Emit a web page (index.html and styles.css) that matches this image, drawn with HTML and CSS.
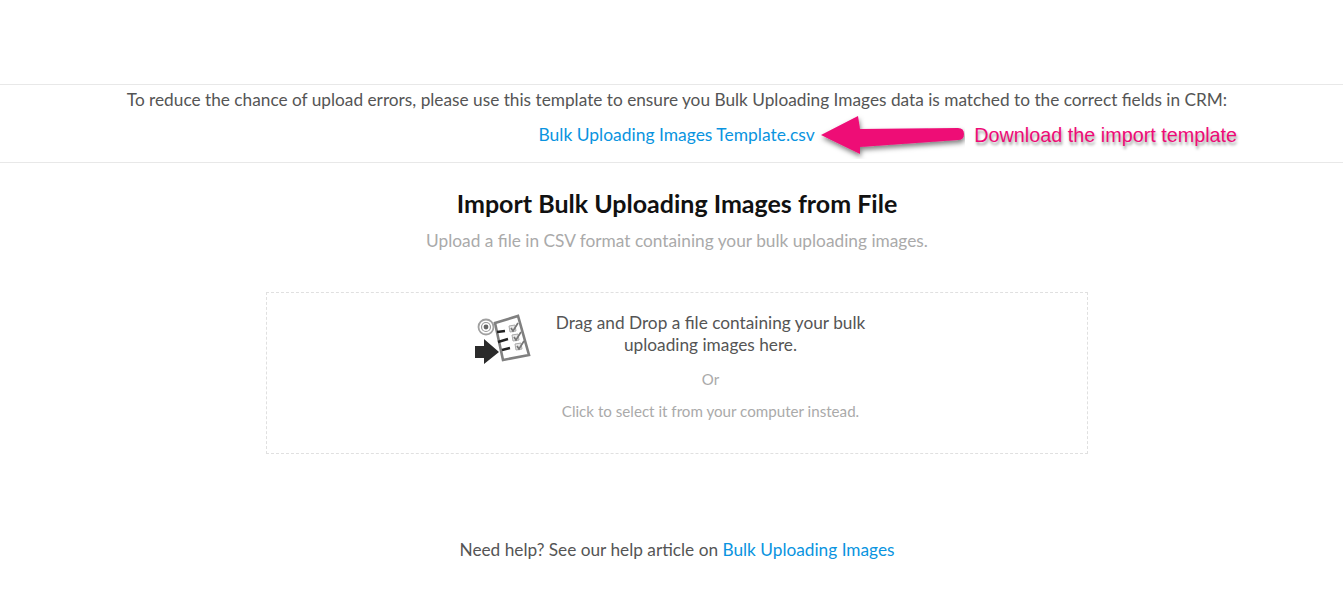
FILE: index.html
```html
<!DOCTYPE html>
<html lang="en">
<head>
    <meta charset="utf-8">
    <title>Import Bulk Uploading Images</title>
    <link rel="stylesheet" href="styles.css">
</head>
<body>
<div class="template-bar">
    <p class="template-text">To reduce the chance of upload errors, please use this template to ensure you Bulk Uploading Images data is matched to the correct fields in CRM:</p>
    <p class="template-link-row">
        <a class="link" href="#">Bulk Uploading Images Template.csv</a>
        <svg class="callout-arrow" width="150" height="50" viewBox="0 0 150 50">
            <defs>
                <filter id="arrow-shadow" x="-10%" y="-20%" width="125%" height="160%">
                    <feDropShadow dx="1" dy="3" stdDeviation="2.5" flood-color="#000" flood-opacity="0.5"/>
                </filter>
            </defs>
            <path d="M6 26 L43 7 L45 20 L143 19 Q149 19 149 25 Q149 31 143 31 L45 38 L45 45 Z" fill="#ee0a76" filter="url(#arrow-shadow)"/>
        </svg>
        <span class="callout-text">Download the import template</span>
    </p>
</div>

<div class="import-head">
    <h1>Import Bulk Uploading Images from File</h1>
    <p class="sub">Upload a file in CSV format containing your bulk uploading images.</p>
</div>

<div class="drop-zone">
    <svg class="drop-icon" width="60" height="60" viewBox="0 0 60 60">
        <path d="M23 13 L46 6 L57 45 L31 50 Z" fill="#fff" stroke="#808080" stroke-width="2.6"/>
        <circle cx="14" cy="17" r="7.5" fill="#fff" stroke="#a0a0a0" stroke-width="1.8"/>
        <circle cx="14" cy="17" r="4.5" fill="none" stroke="#999" stroke-width="1.2"/>
        <circle cx="14" cy="17" r="2.4" fill="#666"/>
        <path d="M25 22 L33 21 M26 32 L36 29 M30 40 L38 38" stroke="#222" stroke-width="2.4"/>
        <path d="M37 16 L43 15 L44 21 L38 22 Z M40 25 L46 24 L47 30 L41 31 Z M43 34 L49 33 L50 39 L44 40 Z" fill="#e8e8e8" stroke="#aaa"/>
        <path d="M39 18 L41 21 L46 13 M42 27 L44 30 L49 22 M45 36 L47 39 L52 31" fill="none" stroke="#777" stroke-width="1.7"/>
        <path d="M3 36 L12 36 L12 29 L27 42 L12 54 L12 48 L3 48 Z" fill="#2b2b2b"/>
    </svg>
    <div class="drop-copy">
        <p class="drop-title">Drag and Drop a file containing your bulk uploading images here.</p>
        <p class="drop-or">Or</p>
        <p class="drop-click">Click to select it from your computer instead.</p>
    </div>
</div>

<p class="help">Need help? See our help article on <a class="link" href="#">Bulk Uploading Images</a></p>
</body>
</html>
```

FILE: styles.css
```css
body {
    margin: 0;
    background: #fff;
    font-family: Lato, sans-serif;
    color: #555;
}
p {
    margin: 0;
}
.link {
    color: #0a94e0;
    text-decoration: none;
}
.template-bar {
    box-sizing: content-box;
    margin-top: 84px;
    height: 77px;
    padding-left: 11px;
    border-top: 1px solid #e8e8e8;
    border-bottom: 1px solid #e8e8e8;
    text-align: center;
    font-size: 17.25px;
}
.template-text {
    padding-top: 5px;
    line-height: 20px;
}
.template-link-row {
    display: flex;
    align-items: center;
    height: 36px;
    margin-top: 6px;
    padding-left: 527.5px;
    font-size: 17.45px;
}
.callout-arrow {
    flex-shrink: 0;
}
.callout-text {
    margin-left: 9.5px;
    margin-top: 2px;
    color: #ee0a76;
    font-family: "Liberation Sans", sans-serif;
    font-size: 19.8px;
    text-shadow: 1px 3px 3px rgba(0, 0, 0, 0.4);
}
.import-head {
    text-align: center;
    margin-top: 25px;
    padding-left: 11px;
}
h1 {
    margin: 0;
    color: #111;
    font-size: 25px;
    font-weight: 700;
    line-height: 30px;
}
.sub {
    margin-top: 13px;
    color: #aaa;
    font-size: 17.3px;
    line-height: 20px;
}
.drop-zone {
    display: flex;
    box-sizing: border-box;
    width: 822px;
    height: 162px;
    margin: 41px 0 0 266px;
    padding: 19px 0 0 205px;
    border: 1px dashed #e0e0e0;
}
.drop-icon {
    flex-shrink: 0;
    margin-top: -2px;
    filter: blur(0.4px);
}
.drop-copy {
    width: 340px;
    margin-left: 8.5px;
    text-align: center;
}
.drop-title {
    font-size: 17.25px;
    line-height: 22px;
}
.drop-or {
    margin-top: 14px;
    color: #aaa;
    font-size: 15px;
    line-height: 18px;
}
.drop-click {
    margin-top: 14px;
    color: #aaa;
    font-size: 15.15px;
    line-height: 18px;
}
.help {
    margin-top: 86px;
    padding-left: 11px;
    text-align: center;
    font-size: 17.25px;
    line-height: 20px;
}
```
